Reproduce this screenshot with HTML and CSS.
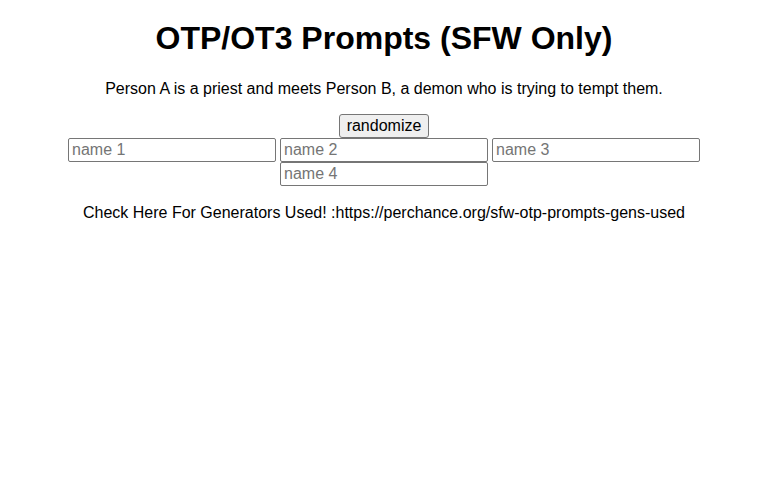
FILE: index.html
```html
<!DOCTYPE html>
<html>
<head>
<meta charset="utf-8">
<link rel="stylesheet" href="styles.css">
</head>
<body>
<h1 class="title">OTP/OT3 Prompts (SFW Only)</h1>
<p class="prompt">Person A is a priest and meets Person B, a demon who is trying to tempt them.</p>
<div class="controls">
  <button class="btn">randomize</button>
</div>
<div class="names">
  <input class="name" type="text" placeholder="name 1">
  <input class="name" type="text" placeholder="name 2">
  <input class="name" type="text" placeholder="name 3">
  <input class="name" type="text" placeholder="name 4">
</div>
<p class="credit">Check Here For Generators Used! :https://perchance.org/sfw-otp-prompts-gens-used</p>
</body>
</html>
```
FILE: styles.css
```css
body {
  margin: 0;
  padding: 0 8px;
  font-family: "Liberation Sans", Arial, sans-serif;
  font-size: 16px;
  color: #000;
  background: #fff;
  text-align: center;
}
.title {
  font-size: 32px;
  font-weight: bold;
  margin: 0;
  padding: 20px 0 0;
}
.prompt {
  margin: 23px 0 16px;
}
.controls {
  display: flex;
  justify-content: center;
}
.btn {
  font-family: "Liberation Sans", Arial, sans-serif;
  font-size: 16px;
  line-height: 18px;
  height: 24px;
  padding: 1px 7px;
  border: 1px solid #767676;
  border-radius: 3px;
  background: #efefef;
  color: #000;
}
.names {
  display: flex;
  flex-wrap: wrap;
  justify-content: center;
  column-gap: 4px;
  row-gap: 0;
}
.name {
  box-sizing: border-box;
  width: 208px;
  height: 24px;
  font-family: "Liberation Sans", Arial, sans-serif;
  font-size: 16px;
  padding: 1px 3px;
  border: 1px solid #767676;
  border-radius: 2px;
  margin: 0;
}
.name::placeholder {
  color: #757575;
}
.credit {
  margin: 18px 0;
}
```
